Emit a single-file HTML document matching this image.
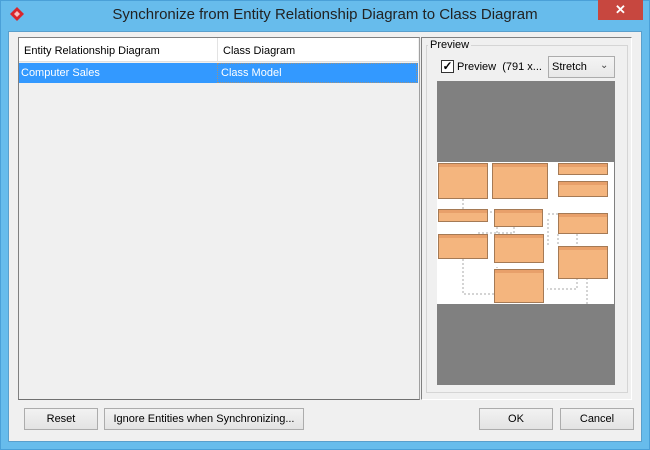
<!DOCTYPE html>
<html><head><style>
*{margin:0;padding:0;box-sizing:border-box}
body{width:650px;height:450px;background:#67bcec;font-family:"Liberation Sans",Tahoma,sans-serif;font-size:11px;color:#000;position:relative;overflow:hidden}
.a{position:absolute}
.btn{position:absolute;background:linear-gradient(#f2f2f2,#e3e3e3);border:1px solid #acacac;text-align:center;line-height:20px;font-size:11px}
.bx{position:absolute;background:#f4b57e;border:1px solid #a57a55}
.bx i{position:absolute;left:0;right:0;top:0;height:3px;background:#e8a06a}
</style></head><body>
<div class="a" style="left:0;top:0;width:650px;height:450px;border:1px solid #4aa0d8"></div>
<svg class="a" style="left:9px;top:6px" width="16" height="16" viewBox="0 0 16 16"><path d="M8 1L15 8L8 15L1 8Z" fill="#d9262c"/><path d="M8 5L11 8L8 11L5 8Z" fill="#f9c0c0"/></svg>
<div class="a" style="left:0;top:6px;width:650px;text-align:center;font-size:15px;color:#222">Synchronize from Entity Relationship Diagram to Class Diagram</div>
<div class="a" style="left:598px;top:0;width:45px;height:20px;background:#c7473f;color:#fff;text-align:center;font-size:13px;line-height:20px;font-weight:bold">✕</div>
<div class="a" style="left:8px;top:31px;width:634px;height:411px;background:#f0f0f0;border:1px solid #5a9fcc"></div>
<div class="a" style="left:18px;top:37px;width:402px;height:363px;background:#f0f0f0;border:1px solid #808080;border-right-color:#a0a0a0;border-bottom-color:#707070"></div>
<div class="a" style="left:19px;top:38px;width:399px;height:24px;background:#fff;border-bottom:1px solid #e0e0e0"></div>
<div class="a" style="left:217px;top:38px;width:1px;height:24px;background:#e3e3e3"></div>
<div class="a" style="left:24px;top:45px">Entity Relationship Diagram</div>
<div class="a" style="left:223px;top:45px">Class Diagram</div>
<div class="a" style="left:19px;top:63px;width:399px;height:20px;background:#3399ff"></div>
<div class="a" style="left:217px;top:63px;width:200px;height:20px;border:1px dotted #c89050;opacity:.7"></div>
<div class="a" style="left:21px;top:67px;color:#fff">Computer Sales</div>
<div class="a" style="left:221px;top:67px;color:#fff">Class Model</div>
<div class="a" style="left:421px;top:37px;width:211px;height:363px;border:1px solid #808080;border-right-color:#fff;border-bottom-color:#fff"></div>
<div class="a" style="left:426px;top:45px;width:202px;height:348px;border:1px solid #d5d5d5"></div>
<div class="a" style="left:428px;top:39px;background:#f0f0f0;padding:0 2px">Preview</div>
<div class="a" style="left:441px;top:60px;width:13px;height:13px;border:1px solid #333;background:#fff;font-size:12px;line-height:11px;text-align:center;font-weight:bold">✓</div>
<div class="a" style="left:457px;top:61px">Preview&nbsp; (791 x...</div>
<div class="a" style="left:548px;top:56px;width:67px;height:22px;border:1px solid #acacac;background:linear-gradient(#f4f4f4,#e8e8e8)"></div>
<div class="a" style="left:552px;top:61px">Stretch</div>
<div class="a" style="left:600px;top:60px;font-size:10px;color:#444">⌄</div>
<div class="a" style="left:437px;top:81px;width:178px;height:304px;background:#808080"></div>
<div class="a" style="left:437px;top:162px;width:177px;height:142px;background:#fff"></div>
<svg class="a" style="left:437px;top:162px" width="177" height="142"><g stroke="#aaa" stroke-dasharray="2,2" fill="none"><path d="M26 37V50H80V47M53 50H99V47M77 65V71H40V72M60 57V71M111 57V84M111 52H140M140 52V127H110M77 74V72M26 97V132H57M121 72V84M130 150H150V117M60 130V105"/></g></svg>
<div class="bx" style="left:438px;top:163px;width:50px;height:36px"><i></i></div>
<div class="bx" style="left:492px;top:163px;width:56px;height:36px"><i></i></div>
<div class="bx" style="left:558px;top:163px;width:50px;height:12px"><i></i></div>
<div class="bx" style="left:558px;top:181px;width:50px;height:16px"><i></i></div>
<div class="bx" style="left:438px;top:209px;width:50px;height:13px"><i></i></div>
<div class="bx" style="left:494px;top:209px;width:49px;height:18px"><i></i></div>
<div class="bx" style="left:558px;top:213px;width:50px;height:21px"><i></i></div>
<div class="bx" style="left:438px;top:234px;width:50px;height:25px"><i></i></div>
<div class="bx" style="left:494px;top:234px;width:50px;height:29px"><i></i></div>
<div class="bx" style="left:558px;top:246px;width:50px;height:33px"><i></i></div>
<div class="bx" style="left:494px;top:269px;width:50px;height:34px"><i></i></div>
<div class="btn" style="left:24px;top:408px;width:74px;height:22px">Reset</div>
<div class="btn" style="left:104px;top:408px;width:200px;height:22px">Ignore Entities when Synchronizing...</div>
<div class="btn" style="left:479px;top:408px;width:74px;height:22px">OK</div>
<div class="btn" style="left:560px;top:408px;width:74px;height:22px">Cancel</div>
</body></html>
